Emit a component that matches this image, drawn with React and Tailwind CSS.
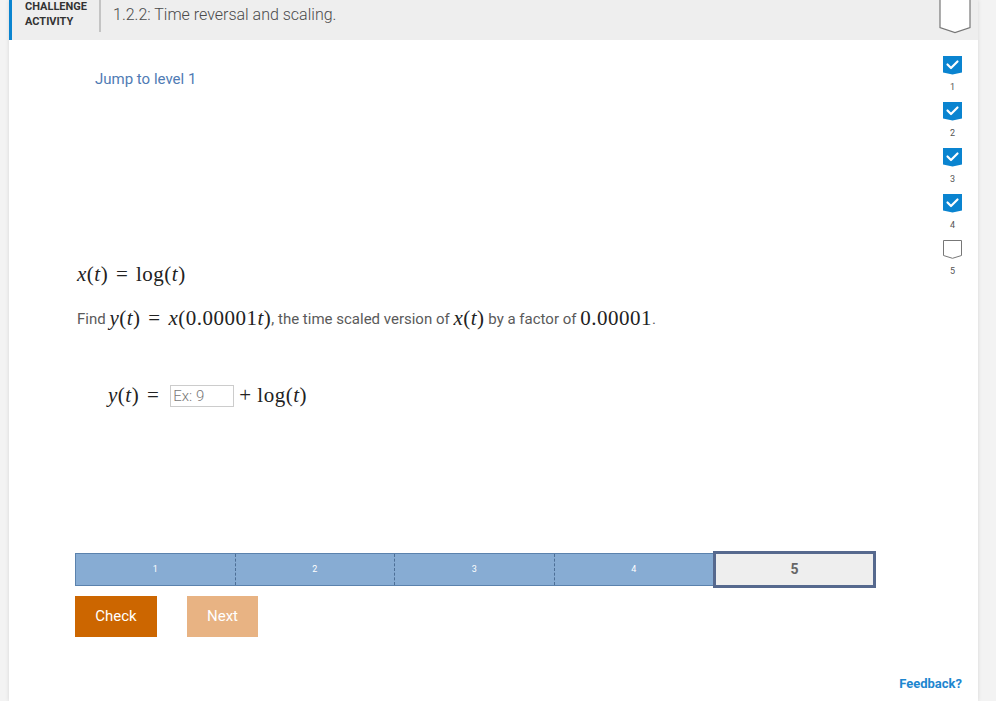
import React from "react";

const V = ({ children }) => <i className="italic">{children}</i>;

function Math({ children, className = "" }) {
  return (
    <span className={"font-['Liberation_Serif',serif] text-[21px] tracking-[0.5px] text-[#222] whitespace-nowrap " + className}>
      {children}
    </span>
  );
}

function LevelIcon({ done }) {
  return (
    <svg width="19" height="19" viewBox="0 0 19 19">
      {done ? (
        <>
          <path d="M0 0H19V16.5L9.5 18.5L0 16.5Z" fill="#0a84d0" />
          <path d="M4.5 8.5L8 12L14.5 5.5" stroke="#fff" strokeWidth="2.2" fill="none" strokeLinecap="round" strokeLinejoin="round" />
        </>
      ) : (
        <path d="M0.5 0.5H18.5V15.5L9.5 18.3L0.5 15.5Z" fill="#fff" stroke="#777" strokeWidth="1" />
      )}
    </svg>
  );
}

function LevelColumn() {
  const levels = [1, 2, 3, 4, 5];
  return (
    <div className="flex flex-col items-center w-[19px] mr-[16px] pt-[16px] gap-[10px]">
      {levels.map((n) => (
        <div key={n} className="flex flex-col items-center">
          <LevelIcon done={n < 5} />
          <span className="text-[9px] text-[#555] leading-[10px] mt-[7px]">{n}</span>
        </div>
      ))}
    </div>
  );
}

function ProgressBar() {
  return (
    <div className="flex items-center w-[801px] h-[37px]">
      <div className="flex-none w-[638px] h-[33px] bg-[#87acd3] border border-r-0 border-[#5b82ad] flex">
        {[1, 2, 3, 4].map((n) => (
          <React.Fragment key={n}>
            <div className="flex-1 flex items-center justify-center text-[9px] text-white">{n}</div>
            {n < 4 && <div className="w-0 border-l border-dashed border-[#4d6f96]" />}
          </React.Fragment>
        ))}
      </div>
      <div className="flex-1 h-[37px] bg-[#eeeeee] border-[3px] border-[#56698e] flex items-center justify-center text-[14px] font-bold text-[#666]">
        5
      </div>
    </div>
  );
}

export default function App() {
  return (
    <div className="w-full h-[701px] bg-[#f3f3f3] flex font-['Roboto',sans-serif] overflow-hidden">
      <div className="ml-[9px] w-[969px] h-full bg-white flex flex-col shadow-[0_0_4px_rgba(0,0,0,0.12)]">
        <div className="relative h-10 flex-none bg-[#eeeeee] border-l-[3px] border-[#0a84d0] flex items-start">
          <div className="pl-[13px] text-[11px] font-bold leading-[15px] text-[#333] w-[87px] -mt-[1px]">
            <div>CHALLENGE</div>
            <div>ACTIVITY</div>
          </div>
          <div className="w-[2px] h-[32px] bg-[#c4c4c4]" />
          <div className="pl-[12px] pt-[3px] text-[16px] text-[#4a4a4a] font-light">
            1.2.2: Time reversal and scaling.
          </div>
          <svg className="absolute right-[7px] top-0" width="32" height="34" viewBox="0 0 32 34">
            <path d="M1 -2V27.5L16 32.5L31 27.5V-2" fill="#fff" stroke="#777" strokeWidth="1.2" />
          </svg>
        </div>

        <div className="flex-1 flex">
          <div className="flex-1 flex flex-col pl-[68px]">
            <div className="pl-[18px] mt-[30px] text-[15px] text-[#4f7bb4] leading-[18px]">
              Jump to level 1
            </div>

            <div className="mt-[176px] h-[22px] flex items-center">
              <Math>
                <V>x</V>(<V>t</V>) <span className="mx-[2px]">=</span> log(<V>t</V>)
              </Math>
            </div>

            <div className="mt-[22px] h-[22px] flex items-center text-[15px] text-[#5a5a5a] whitespace-nowrap">
              Find&nbsp;
              <Math>
                <V>y</V>(<V>t</V>) <span className="mx-[2px]">=</span> <V>x</V>(0.00001<V>t</V>)
              </Math>
              , the time scaled version of&nbsp;
              <Math>
                <V>x</V>(<V>t</V>)
              </Math>
              &nbsp;by a factor of&nbsp;
              <Math>0.00001</Math>.
            </div>

            <div className="mt-[55px] pl-[31px] h-[22px] flex items-center">
              <Math>
                <V>y</V>(<V>t</V>) <span className="mx-[2px]">=</span>
              </Math>
              <input
                className="ml-[9px] w-[64px] h-[22px] border border-[#cccccc] px-[2px] text-[15px] font-light text-[#333] placeholder:text-[#777] outline-none"
                placeholder="Ex: 9"
              />
              <Math className="ml-[5px]">
                + log(<V>t</V>)
              </Math>
            </div>

            <div className="mt-[144px] -ml-[2px]">
              <ProgressBar />
            </div>

            <div className="mt-[8px] -ml-[2px] flex gap-[30px]">
              <button className="w-[82px] h-[41px] bg-[#cc6600] text-white text-[15px]">Check</button>
              <button className="w-[71px] h-[41px] bg-[#e8b383] text-white text-[15px]">Next</button>
            </div>

            <div className="flex-1" />
          </div>

          <div className="flex flex-col justify-between">
            <LevelColumn />
            <div className="text-[13px] font-bold text-[#1d86cf] mr-[16px] mb-[8px] -ml-[60px] text-right whitespace-nowrap">
              Feedback?
            </div>
          </div>
        </div>
      </div>
    </div>
  );
}
